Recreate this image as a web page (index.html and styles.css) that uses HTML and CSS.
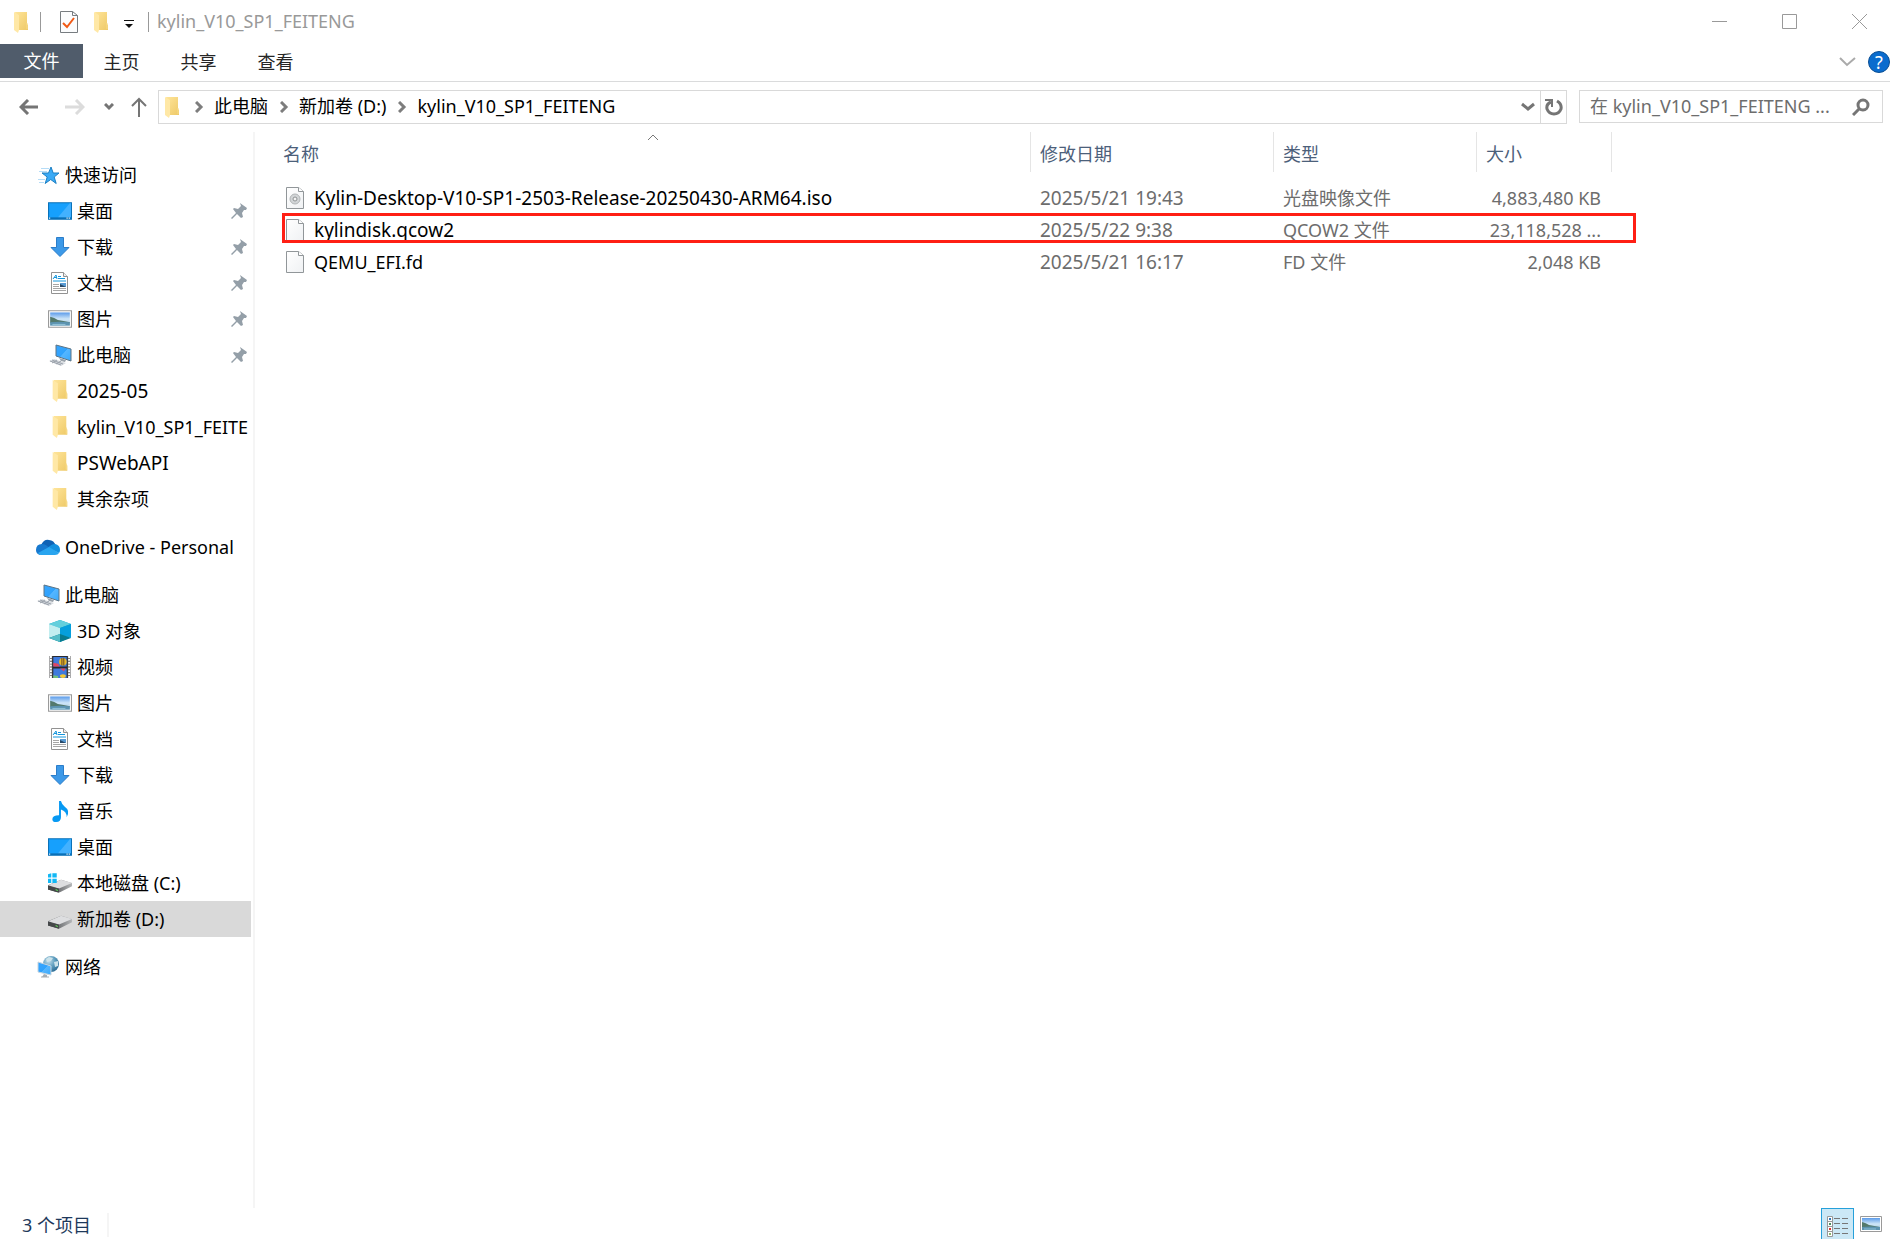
FILE: index.html
```html
<!DOCTYPE html>
<html lang="zh-CN">
<head>
<meta charset="utf-8">
<title>kylin_V10_SP1_FEITENG</title>
<link rel="stylesheet" href="styles.css">
</head>
<body>
<svg class="sprite" aria-hidden="true">
  <defs>
    <linearGradient id="g-folder" x1="0" y1="0" x2="1" y2="1"><stop offset="0" stop-color="#ffe59a"/><stop offset="1" stop-color="#eec967"/></linearGradient>
    <linearGradient id="g-sky" x1="0" y1="0" x2="0" y2="1"><stop offset="0" stop-color="#5b9bea"/><stop offset=".5" stop-color="#cfe6f8"/><stop offset="1" stop-color="#9cc4dc"/></linearGradient>
    <linearGradient id="g-screen" x1="0" y1="0" x2="1" y2="1"><stop offset="0" stop-color="#38a5ff"/><stop offset=".5" stop-color="#2fa2fc"/><stop offset=".52" stop-color="#55b6ff"/><stop offset="1" stop-color="#3aa9fb"/></linearGradient>
    <linearGradient id="g-page" x1="0" y1="0" x2="1" y2="1"><stop offset="0" stop-color="#fff"/><stop offset="1" stop-color="#eff1f3"/></linearGradient>
    <linearGradient id="g-drive" x1="0" y1="0" x2="1" y2="0"><stop offset="0" stop-color="#3a3d3f"/><stop offset=".5" stop-color="#77797b"/><stop offset="1" stop-color="#b5b7b9"/></linearGradient>
    <radialGradient id="g-globe" cx=".35" cy=".3" r=".8"><stop offset="0" stop-color="#c5dfec"/><stop offset=".5" stop-color="#5f9ebf"/><stop offset="1" stop-color="#25658e"/></radialGradient>
  </defs>
  <symbol id="folder" viewBox="0 0 14 21"><path d="M1 0h12v12l1 1v5H4z" fill="url(#g-folder)"/><path d="M0 0l5 3v15l-1 3-4-3z" fill="#ffe8a6"/><path d="M13 11v6" stroke="#f8dc8b" fill="none"/></symbol>
  <symbol id="star" viewBox="0 0 24 20"><path d="M15 2l2.200 6H23l-4.800 4 2 6.500-5.500-4-5.500 4 2-6.500L6 8h6.500z" fill="#3aaaf5" stroke="#1d80c4"/><path d="M5 3.500h8M3 6.500h8M2 14.500h7M3 17.500h5" stroke="#b5dcf7" fill="none"/></symbol>
  <symbol id="desktop" viewBox="0 0 22 16"><path d="M.5.5h21v15H.5z" fill="#16a0fd" stroke="#0b72b8"/><path d="M20 1L9 14h12V1z" fill="#42b1ff"/><path d="M1 14.5h20" stroke="#075b98"/><path d="M1 14h1v1H1zM17 14h1v1h-1zM19 14h1v1h-1z" fill="#fff"/></symbol>
  <symbol id="download" viewBox="0 0 22 22"><path d="M7.500 1.500h7v10h5.500L11 20.500 2 11.500h5.500z" fill="#3c99e8" stroke="#2b7dc9"/></symbol>
  <symbol id="document" viewBox="0 0 22 22"><path d="M2.500.5h12l4 4v17h-16z" fill="#fff" stroke="#929292"/><path d="M14.500.5v4h4" fill="#eee" stroke="#929292"/><path d="M4 7l3-4 1 4M5 5.500h3M9 4.500h3M9 6.500h7M4 9h13" stroke="#1596dc" fill="none"/><path d="M4 12.500h6M4 14.500h6M4 16.500h13M4 18.500h13" stroke="#a6a6a6"/><path d="M11 11h6v4h-6z" fill="#589bd4"/><path d="M11 12l6 3h-6z" fill="#294967"/></symbol>
  <symbol id="picture" viewBox="0 0 22 16"><path d="M.5.5h21v15H.5z" fill="#fff" stroke="#9a9a9a"/><path d="M2 2h18v12H2z" fill="url(#g-sky)"/><path d="M2 6q4 1 7 3 5 1 11 2v1H2z" fill="#53796c"/><path d="M2 11q9-1 18 0v3H2z" fill="#5c93b0"/><path d="M4 13h12" stroke="#8dbfd4"/></symbol>
  <symbol id="computer" viewBox="0 0 24 22"><path d="M8 1l15 4v12L8 12z" fill="url(#g-screen)" stroke="#5e7484"/><path d="M11 14l7 2-1 2-4-1z" fill="#9ba3ab"/><path d="M1 17l5-2 12 4-5 3z" fill="#d7dbe0"/><path d="M2 17l11 4M4 16l11 4M4 19l5-3M8 20l5-3" stroke="#9da4ad" fill="none"/></symbol>
  <symbol id="cloud" viewBox="0 0 24 16"><path d="M5 6Q8 0 13 1q5 0 7 6l-8 5z" fill="#0f62b5"/><path d="M0 11q0-6 6-6 4 0 7 4l-9 7q-4-1-4-5z" fill="#1779cf"/><path d="M12 9q3-4 7-4 5 1 5 6 0 2-1 3z" fill="#1490df"/><path d="M2 14L13 8l10 6q-1 2-4 2H5q-2 0-3-2z" fill="#29a5ef"/></symbol>
  <symbol id="cube" viewBox="0 0 22 22"><path d="M0 4l11-4 11 4v13l-11 5-11-5z" fill="#00a7cc"/><path d="M0 4l11-4 11 4-11 4z" fill="#63cfdc"/><path d="M0 4l11 4v8L0 18z" fill="#c2eef0"/><path d="M11 8l11-4v14l-11-4z" fill="#069fdd"/><path d="M0 18l11-4 11 4-11 4z" fill="#087b91"/><path d="M0 18l11-4v8z" fill="#55bdc7"/></symbol>
  <symbol id="video" viewBox="0 0 22 23"><path d="M0 0h22v23H0z" fill="#59595b"/><path d="M1.500 0v23M20.500 0v23" stroke="#fff" stroke-width="2" stroke-dasharray="2 1"/><path d="M3 0h16v23H3z" fill="#2a2b30"/><path d="M4 1h14v10H4zM4 13h14v10H4z" fill="#3f7bdd"/><path d="M4 7l5 1 2 3H4zM11 13h6l-2 3z" fill="#e14661"/><ellipse cx="14" cy="6" rx="4" ry="4" fill="#eab928"/><path d="M13 2v8M15 2v8" stroke="#5b3f27"/><ellipse cx="14" cy="21" rx="3" ry="2" fill="#f3c935"/><path d="M4 20l5 1v2H4z" fill="#73c27a"/></symbol>
  <symbol id="music" viewBox="0 0 22 23"><path d="M10 1h2q1 4 4 6 6 4 2 11 0-6-6-8v8q0 5-5 5-4 0-4-3 0-4 7-4z" fill="#0799f3"/></symbol>
  <symbol id="drive" viewBox="0 0 22 18"><path d="M0 11l12-5 10 3v3L10 18 0 15z" fill="url(#g-drive)"/><path d="M0 11l12-5 10 3-12 5z" fill="#dddee0"/><path d="M0 12l10 2v4L0 15z" fill="#454849"/><path d="M7 15l2 1" stroke="#65e05f"/></symbol>
  <symbol id="drive-c" viewBox="0 0 22 18"><use href="#drive"/><path d="M0 1l3-1v4H0zM4 0h4v4H4zM0 5h3v4H0zM4 5h4v4H4z" fill="#12b8f5"/></symbol>
  <symbol id="network" viewBox="0 0 22 22"><circle cx="14" cy="8" r="8" fill="url(#g-globe)"/><path d="M9 3l3-2 4 1-2 3-4 1zM17 6l4-1v5l-3 1z" fill="#cce3eb"/><path d="M1 6l13 4v9L1 16z" fill="url(#g-screen)" stroke="#c8d6df"/><path d="M7 18l3 1v2H5z" fill="#a6aeb4"/><path d="M4 21h8" stroke="#a6aeb4"/></symbol>
  <symbol id="pin" viewBox="0 0 16 16"><path d="M9 0l7 5-1 2h-2l-2 3 1 4-2 1-4-4-5 5-1-1 5-5-3-4 1-1 4 1 3-3z" fill="#949fa8"/></symbol>
  <symbol id="file" viewBox="0 0 18 22"><path d="M.5.5h12l5 4v17H.5z" fill="url(#g-page)" stroke="#919699"/><path d="M12.500.5v4h5" fill="#fff" stroke="#919699"/></symbol>
  <symbol id="disc" viewBox="0 0 18 22"><use href="#file"/><circle cx="9" cy="12" r="5" fill="#d2d5d7" stroke="#b1b4b6"/><circle cx="9" cy="12" r="2" fill="#f3f3f3" stroke="#8e9294"/></symbol>
  <symbol id="crumb" viewBox="0 0 9 12"><path d="M1 1l5 5-5 5" fill="none" stroke="#7d7d7d" stroke-width="3"/></symbol>
</svg>

<div class="window">
  <header class="titlebar">
    <svg class="ic-folder app-icon"><use href="#folder"/></svg>
    <span class="rule"></span>
    <button class="quick" aria-label="属性"><svg width="18" height="22" viewBox="0 0 18 22"><path d="M.5.5h12l5 4v17H.5z" fill="#fbfcfd" stroke="#777c80"/><path d="M12.500.5v4h5" fill="none" stroke="#777c80"/><path d="M3 12l4 4 7-9" fill="none" stroke="#f15a16" stroke-width="2"/></svg></button>
    <button class="quick" aria-label="新建文件夹"><svg class="ic-folder"><use href="#folder"/></svg></button>
    <button class="quick" aria-label="自定义快速访问工具栏"><svg width="10" height="14" viewBox="0 0 10 14"><path d="M0 5h10v1H0zM1 9h8l-4 4z" fill="#111"/></svg></button>
    <span class="rule title-rule"></span>
    <h1>kylin_V10_SP1_FEITENG</h1>
    <div class="controls">
      <button aria-label="最小化"><svg width="16" height="16"><path d="M0 7.500h15" stroke="#999"/></svg></button>
      <button aria-label="最大化"><svg width="16" height="16"><path d="M.5.5h14v14H.5z" fill="none" stroke="#999"/></svg></button>
      <button aria-label="关闭"><svg width="16" height="16"><path d="M0 0l15 15M15 0L0 15" stroke="#999"/></svg></button>
    </div>
  </header>

  <nav class="ribbon" aria-label="功能区">
    <button class="file-tab">文件</button>
    <button>主页</button>
    <button>共享</button>
    <button>查看</button>
    <div class="ribbon-end">
      <button class="plain" aria-label="展开功能区"><svg width="17" height="10" viewBox="0 0 17 10"><path d="M1 1l7 7 8-7" fill="none" stroke="#aaa" stroke-width="2"/></svg></button>
      <button class="help" aria-label="帮助">?</button>
    </div>
  </nav>

  <div class="navbar">
    <div class="history">
      <button class="plain" aria-label="后退"><svg width="20" height="16" viewBox="0 0 20 16"><path d="M19 8H3M9 1L2 8l7 7" fill="none" stroke="#757575" stroke-width="3"/></svg></button>
      <button class="plain" aria-label="前进"><svg width="20" height="16" viewBox="0 0 20 16"><path d="M0 8h17M11 1l7 7-7 7" fill="none" stroke="#dcdcdc" stroke-width="3"/></svg></button>
      <button class="plain" aria-label="最近浏览的位置"><svg width="10" height="8" viewBox="0 0 10 8"><path d="M1 1l4 4 4-4" fill="none" stroke="#757575" stroke-width="3"/></svg></button>
      <button class="plain" aria-label="上移"><svg width="16" height="20" viewBox="0 0 16 20"><path d="M8 20V3M1 9l7-7 7 7" fill="none" stroke="#757575" stroke-width="2"/></svg></button>
    </div>
    <div class="address">
      <svg class="ic-folder"><use href="#folder"/></svg>
      <svg class="crumb"><use href="#crumb"/></svg><a href="#">此电脑</a>
      <svg class="crumb"><use href="#crumb"/></svg><a href="#">新加卷 (D:)</a>
      <svg class="crumb"><use href="#crumb"/></svg><a href="#">kylin_V10_SP1_FEITENG</a>
      <button class="plain drop" aria-label="以前的位置"><svg width="14" height="10" viewBox="0 0 14 10"><path d="M1 2l6 5 6-5" fill="none" stroke="#757575" stroke-width="3"/></svg></button>
      <button class="plain refresh" aria-label="刷新"><svg width="18" height="18" viewBox="0 0 18 18"><path d="M6 4Q1 6 2 11q2 5 7 5 5 0 7-5 1-5-4-8" fill="none" stroke="#757575" stroke-width="3"/><path d="M0 1h8v8H6V3H0z" fill="#757575"/></svg></button>
    </div>
    <label class="search">
      <input type="text" aria-label="搜索" placeholder="在 kylin_V10_SP1_FEITENG ...">
      <svg width="18" height="18" viewBox="0 0 18 18"><circle cx="11" cy="7" r="5" fill="none" stroke="#757575" stroke-width="3"/><path d="M8 10l-7 7" stroke="#757575" stroke-width="3"/></svg>
    </label>
  </div>

  <div class="body">
    <nav class="sidebar" aria-label="导航窗格">
      <section>
        <a href="#" class="root"><svg><use href="#star"/></svg>快速访问</a>
        <a href="#"><svg><use href="#desktop"/></svg><span>桌面</span><svg class="pin"><use href="#pin"/></svg></a>
        <a href="#"><svg><use href="#download"/></svg><span>下载</span><svg class="pin"><use href="#pin"/></svg></a>
        <a href="#"><svg><use href="#document"/></svg><span>文档</span><svg class="pin"><use href="#pin"/></svg></a>
        <a href="#"><svg><use href="#picture"/></svg><span>图片</span><svg class="pin"><use href="#pin"/></svg></a>
        <a href="#"><svg><use href="#computer"/></svg><span>此电脑</span><svg class="pin"><use href="#pin"/></svg></a>
        <a href="#"><svg><use href="#folder"/></svg><span class="latin">2025-05</span></a>
        <a href="#"><svg><use href="#folder"/></svg><span>kylin_V10_SP1_FEITE</span></a>
        <a href="#"><svg><use href="#folder"/></svg><span class="latin">PSWebAPI</span></a>
        <a href="#"><svg><use href="#folder"/></svg><span>其余杂项</span></a>
      </section>
      <section>
        <a href="#" class="root"><svg><use href="#cloud"/></svg>OneDrive - Personal</a>
      </section>
      <section>
        <a href="#" class="root"><svg><use href="#computer"/></svg>此电脑</a>
        <a href="#"><svg><use href="#cube"/></svg><span>3D 对象</span></a>
        <a href="#"><svg><use href="#video"/></svg><span>视频</span></a>
        <a href="#"><svg><use href="#picture"/></svg><span>图片</span></a>
        <a href="#"><svg><use href="#document"/></svg><span>文档</span></a>
        <a href="#"><svg><use href="#download"/></svg><span>下载</span></a>
        <a href="#"><svg><use href="#music"/></svg><span>音乐</span></a>
        <a href="#"><svg><use href="#desktop"/></svg><span>桌面</span></a>
        <a href="#"><svg><use href="#drive-c"/></svg><span>本地磁盘 (C:)</span></a>
        <a href="#" class="selected"><svg><use href="#drive"/></svg><span>新加卷 (D:)</span></a>
      </section>
      <section>
        <a href="#" class="root"><svg><use href="#network"/></svg>网络</a>
      </section>
    </nav>

    <main>
      <table>
        <colgroup><col class="c-name"><col class="c-date"><col class="c-type"><col class="c-size"></colgroup>
        <thead>
          <tr>
            <th>名称<svg class="sort" width="12" height="7"><path d="M1 6l5-5 5 5" fill="none" stroke="#777"/></svg></th>
            <th>修改日期</th><th>类型</th><th>大小</th>
          </tr>
        </thead>
        <tbody>
          <tr><td><div class="name latin"><svg><use href="#disc"/></svg>Kylin-Desktop-V10-SP1-2503-Release-20250430-ARM64.iso</div></td><td class="latin">2025/5/21 19:43</td><td>光盘映像文件</td><td>4,883,480 KB</td></tr>
          <tr class="marked"><td><div class="name latin"><svg><use href="#file"/></svg>kylindisk.qcow2</div><span class="frame"></span></td><td class="latin">2025/5/22 9:38</td><td>QCOW2 文件</td><td>23,118,528 ...</td></tr>
          <tr><td><div class="name"><svg><use href="#file"/></svg>QEMU_EFI.fd</div></td><td class="latin">2025/5/21 16:17</td><td>FD 文件</td><td>2,048 KB</td></tr>
        </tbody>
      </table>
    </main>
  </div>

  <footer class="status">
    <span class="count">3 个项目</span>
    <div class="views">
      <button class="details" aria-label="详细信息"><svg width="22" height="22" viewBox="0 0 22 22"><path d="M.5.5h5v20h-5zM.5 5.500h5M.5 10.500h5M.5 15.500h5" fill="#fff" stroke="#999"/><path d="M2 2h2v2H2z" fill="#3478b8"/><path d="M2 7h2v2H2z" fill="#4d8c60"/><path d="M2 12h2v2H2z" fill="#d33"/><path d="M2 17h2v2H2z" fill="#8ab36b"/><path d="M7 2.500h6M15 2.500h6M7 7.500h6M15 7.500h6M7 12.500h6M15 12.500h6M7 17.500h6M15 17.500h6" stroke="#777"/></svg></button>
      <button class="plain" aria-label="大缩略图"><svg width="22" height="16"><use href="#picture"/></svg></button>
    </div>
  </footer>
</div>
</body>
</html>
```
FILE: styles.css
```css
* { box-sizing: border-box; }

body {
  margin: 0;
  background: #fff;
  color: #000;
  font: 18px/24px "Noto Sans", "Noto Sans CJK SC", sans-serif;
}

.sprite { position: absolute; width: 0; height: 0; }
svg { display: block; flex: none; }
a { color: inherit; text-decoration: none; }
button { font: inherit; color: inherit; background: none; border: 0; padding: 0; }
.plain, .quick { display: flex; align-items: center; justify-content: center; }
.latin { font-size: 19px; }

.window { display: flex; flex-direction: column; height: 100vh; overflow: hidden; }
.ic-folder { width: 14px; height: 21px; }

/* title bar */
.titlebar { display: flex; align-items: center; height: 44px; padding-left: 14px; }
.app-icon { margin-right: 12px; }
.rule { width: 1px; height: 20px; background: #999; }
.quick { margin-left: 16px; }
.quick:first-of-type { margin-left: 19px; }
.title-rule { margin-left: 14px; }
h1 { margin: 0 0 0 8px; padding-bottom: 2px; font-size: 18px; font-weight: 400; color: #999; }
.controls { display: flex; gap: 10px; margin-left: auto; }
.controls button { display: flex; align-items: center; justify-content: center; width: 60px; height: 44px; }

/* ribbon */
.ribbon { display: flex; height: 38px; border-bottom: 1px solid #dadbdc; color: #262626; }
.ribbon > button { width: 77px; height: 34px; padding-top: 2px; }
.ribbon > .file-tab { width: 83px; padding-top: 0; background: #505c6b; color: #fff; }
.ribbon-end { display: flex; align-items: center; gap: 12px; height: 36px; margin-left: auto; }
.help { width: 22px; height: 22px; border: 1px solid #0a4f94; border-radius: 50%; background: #0a6cce; color: #fff; line-height: 20px; }

/* address row */
.navbar { display: flex; align-items: flex-start; padding: 8px 7px 8px 19px; }
.history { display: flex; align-items: center; height: 34px; width: 139px; }
.history button:nth-child(2) { margin-left: 26px; }
.history button:nth-child(3) { margin-left: 19px; }
.history button:nth-child(4) { margin-left: 17px; }
.address { display: flex; flex: 1; align-items: center; height: 34px; padding-left: 6px; border: 1px solid #d9d9d9; }
.address a { padding-bottom: 2px; }
.crumb { width: 9px; height: 12px; margin: 0 10px 0 12px; }
.address .ic-folder + .crumb { margin-left: 16px; }
.drop { width: 24px; height: 32px; margin-left: auto; }
.refresh { width: 26px; height: 32px; border-left: 1px solid #d9d9d9; }
.search { display: flex; align-items: center; width: 304px; height: 33px; margin-left: 12px; padding: 0 12px 0 10px; border: 1px solid #d9d9d9; }
.search input { flex: 1; min-width: 0; padding: 0 0 2px; border: 0; outline: 0; background: none; font: inherit; color: #6d6d6d; }
.search input::placeholder { color: #6d6d6d; opacity: 1; }

/* panes */
.body { display: flex; flex: 1; min-height: 0; }
.sidebar { display: flex; flex-direction: column; gap: 12px; width: 255px; padding: 25px 2px 0 0; border-right: 2px solid #f5f5f5; }
.sidebar a { display: flex; align-items: center; gap: 5px; height: 36px; padding-left: 48px; white-space: nowrap; }
.sidebar a:has(.pin) { padding-right: 4px; }
.sidebar a svg { width: 24px; height: 22px; }
.sidebar .root { padding-left: 36px; }
.sidebar a .pin { width: 16px; height: 16px; margin-left: auto; }
.sidebar .selected { background: #d9d9d9; }

/* file list */
main { flex: 1; min-width: 0; padding-left: 20px; }
table { table-layout: fixed; width: 1337px; border-collapse: separate; border-spacing: 0; }
.c-name { width: 756px; }
.c-date { width: 243px; }
.c-type { width: 203px; }
.c-size { width: 135px; }
th { position: relative; height: 40px; padding: 3px 9px 0; border-right: 1px solid #e5e5e5; color: #4c607a; font-weight: 400; text-align: left; }
th:first-child { padding-left: 8px; }
.sort { position: absolute; top: 2px; left: calc(50% - 6px); }
tbody::before { content: ""; display: block; height: 10px; }
td { height: 32px; padding: 0 9px; color: #6d6d6d; white-space: nowrap; }
td:first-child { color: #000; }
td:last-child { padding-right: 11px; text-align: right; }
.name { display: flex; align-items: center; gap: 10px; padding-left: 2px; }
.name svg { width: 18px; height: 22px; }
.marked { position: relative; }
.frame { position: absolute; top: -1px; left: 7px; right: -24px; height: 30px; border: 3px solid #ff1f14; }

/* status bar */
.status { display: flex; height: 31px; color: #1e395b; }
.count { align-self: flex-end; height: 24px; margin-bottom: 2px; padding: 0 16px 0 22px; border-right: 2px solid #f5f5f5; }
.views { display: flex; gap: 6px; margin-left: auto; padding-right: 8px; }
.details { display: flex; justify-content: center; width: 33px; height: 36px; padding-top: 7px; border: 1px solid #26a0da; background: #cbe8f6; }
```
